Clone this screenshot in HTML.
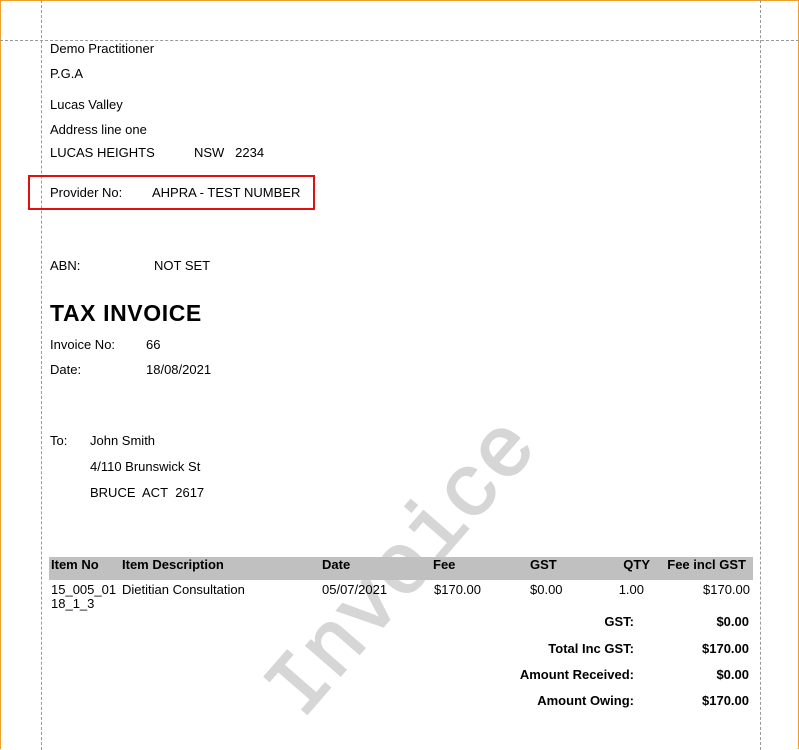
<!DOCTYPE html>
<html><head><style>
body{margin:0;width:799px;height:750px;overflow:hidden;background:#fff;font-family:"Liberation Sans",Arial,sans-serif;font-size:13px;color:#000;position:relative}
.b{position:absolute;border:1px solid #f0a030;left:0;top:0;width:797px;height:748px;border-bottom:none}
.t{position:absolute;white-space:nowrap;line-height:14px;margin-top:1px}
.vl{position:absolute;top:0;height:750px;border-left:1px dashed #999}
.hl{position:absolute;left:0;width:799px;border-top:1px dashed #999}
.bold{font-weight:bold}
.r{text-align:right}
</style></head><body>
<div class="b"></div>
<div class="vl" style="left:41px"></div>
<div class="vl" style="left:760px"></div>
<div class="hl" style="top:40px"></div>
<div class="t" style="font-family:'Liberation Mono',monospace;font-size:86px;line-height:86px;color:#d6d6d6;-webkit-text-stroke:2px #d6d6d6;transform:rotate(-49deg);transform-origin:left top;top:676px;left:252px">Invoice</div>
<div class="t" style="left:50px;top:41px">Demo Practitioner</div>
<div class="t" style="left:50px;top:66px">P.G.A</div>
<div class="t" style="left:50px;top:97px">Lucas Valley</div>
<div class="t" style="left:50px;top:122px">Address line one</div>
<div class="t" style="left:50px;top:145px">LUCAS HEIGHTS</div>
<div class="t" style="left:194px;top:145px">NSW&nbsp;&nbsp; 2234</div>
<div style="position:absolute;left:28px;top:175px;width:283px;height:31px;border:2px solid #e01010"></div>
<div class="t" style="left:50px;top:185px">Provider No:</div>
<div class="t" style="left:152px;top:185px">AHPRA - TEST NUMBER</div>
<div class="t" style="left:50px;top:258px">ABN:</div>
<div class="t" style="left:154px;top:258px">NOT SET</div>
<div class="t bold" style="left:50px;top:299px;font-size:23px;line-height:26px;letter-spacing:0.6px">TAX INVOICE</div>
<div class="t" style="left:50px;top:337px">Invoice No:</div>
<div class="t" style="left:146px;top:337px">66</div>
<div class="t" style="left:50px;top:362px">Date:</div>
<div class="t" style="left:146px;top:362px">18/08/2021</div>
<div class="t" style="left:50px;top:433px">To:</div>
<div class="t" style="left:90px;top:433px">John Smith</div>
<div class="t" style="left:90px;top:459px">4/110 Brunswick St</div>
<div class="t" style="left:90px;top:485px">BRUCE&nbsp; ACT&nbsp; 2617</div>
<div style="position:absolute;left:49px;top:557px;width:704px;height:23px;background:#c0c0c0"></div>
<div class="t bold" style="left:51px;top:557px">Item No</div>
<div class="t bold" style="left:122px;top:557px">Item Description</div>
<div class="t bold" style="left:322px;top:557px">Date</div>
<div class="t bold" style="left:433px;top:557px">Fee</div>
<div class="t bold" style="left:530px;top:557px">GST</div>
<div class="t bold r" style="left:600px;top:557px;width:50px">QTY</div>
<div class="t bold r" style="left:650px;top:557px;width:96px">Fee incl GST</div>
<div class="t" style="left:51px;top:582px">15_005_01<br>18_1_3</div>
<div class="t" style="left:122px;top:582px">Dietitian Consultation</div>
<div class="t" style="left:322px;top:582px">05/07/2021</div>
<div class="t" style="left:434px;top:582px">$170.00</div>
<div class="t" style="left:530px;top:582px">$0.00</div>
<div class="t r" style="left:600px;top:582px;width:44px">1.00</div>
<div class="t r" style="left:650px;top:582px;width:100px">$170.00</div>
<div class="t bold r" style="left:460px;top:614px;width:174px">GST:</div>
<div class="t bold r" style="left:650px;top:614px;width:99px">$0.00</div>
<div class="t bold r" style="left:460px;top:641px;width:174px">Total Inc GST:</div>
<div class="t bold r" style="left:650px;top:641px;width:99px">$170.00</div>
<div class="t bold r" style="left:460px;top:667px;width:174px">Amount Received:</div>
<div class="t bold r" style="left:650px;top:667px;width:99px">$0.00</div>
<div class="t bold r" style="left:460px;top:693px;width:174px">Amount Owing:</div>
<div class="t bold r" style="left:650px;top:693px;width:99px">$170.00</div>
</body></html>
